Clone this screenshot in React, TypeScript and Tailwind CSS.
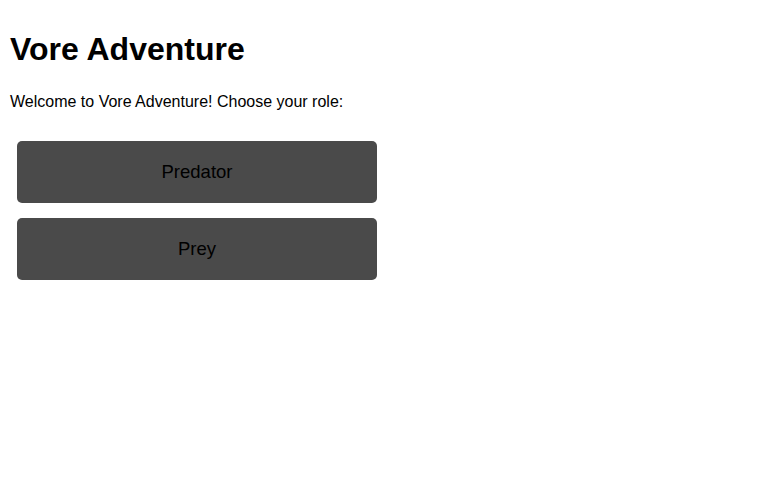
/** App.tsx — role picker landing screen. */

const roles = ['Predator', 'Prey'];

export default function App() {
  return (
    <div className="min-h-screen bg-white px-[10px] pt-[31px] font-['Liberation_Sans',Arial,sans-serif] text-black">
      <h1 className="text-[32px] font-bold leading-[37px]">Vore Adventure</h1>
      <p className="mt-[24.5px] text-base leading-[18.4px]">
        Welcome to Vore Adventure! Choose your role:
      </p>

      <div className="ml-[7px] mt-[30px] flex flex-col gap-[15px]">
        {roles.map((role) => (
          <button
            key={role}
            type="button"
            className="h-[62px] w-[360px] rounded-[5px] bg-[#4a4a4a] text-[18.5px] text-black"
          >
            {role}
          </button>
        ))}
      </div>
    </div>
  );
}
